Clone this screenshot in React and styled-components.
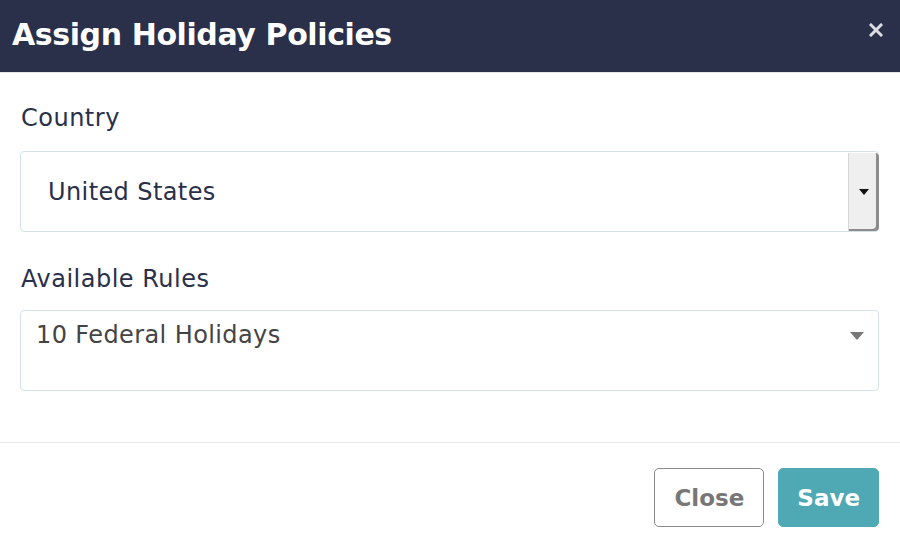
import React from 'react'
import styled, { createGlobalStyle } from 'styled-components'

const GlobalStyle = createGlobalStyle`
  html, body {
    margin: 0;
    padding: 0;
    background: #ffffff;
  }
  body {
    font-family: 'DejaVu Sans', 'Noto Sans', sans-serif;
  }
`

const Modal = styled.div`
  width: 900px;
  height: 548px;
  background: #ffffff;
  display: flex;
  flex-direction: column;
`

const Header = styled.div`
  height: 73px;
  background: #2a2f4a;
  border-bottom: 1px solid #e6e6e6;
  display: flex;
  align-items: center;
  justify-content: space-between;
  padding: 0 14px 0 12px;
  box-sizing: border-box;
`

const Title = styled.h3`
  margin: 0;
  color: #ffffff;
  font-size: 30px;
  font-weight: 700;
  letter-spacing: -0.4px;
  padding-bottom: 3px;
`

const CloseX = styled.button`
  border: none;
  background: none;
  padding: 0;
  margin-top: -12px;
  width: 20px;
  height: 20px;
  display: flex;
  align-items: center;
  justify-content: center;
  cursor: pointer;
`

const Body = styled.div`
  padding: 30px 21px 0 20px;
  display: flex;
  flex-direction: column;
  height: 370px;
  box-sizing: border-box;
  border-bottom: 1px solid #e8e8e8;
`

const Label = styled.label`
  display: block;
  color: #2a2f4a;
  font-size: 24px;
  letter-spacing: 0.5px;
  line-height: 30px;
  margin: 0 0 ${p => p.gap}px 1px;
`

const Field = styled.div`
  position: relative;
  height: 81px;
  border: 1px solid #d3e2e7;
  border-radius: 4px;
  box-sizing: border-box;
  margin-bottom: ${p => p.gap}px;
  display: flex;
  align-items: ${p => (p.top ? 'flex-start' : 'center')};
  padding: ${p => (p.top ? '10px 0 0 15px' : '0 0 0 27px')};
  color: ${p => p.color};
  font-size: 24px;
  letter-spacing: 0.4px;
`

const NativeButton = styled.div`
  position: absolute;
  right: -1px;
  top: 1px;
  bottom: 0;
  width: 30px;
  background: #efefef;
  border-left: 1px solid #d6d6d6;
  box-shadow: inset -3px -2px 0 #8c8c8c;
  border-radius: 0 4px 4px 0;
  display: flex;
  align-items: center;
  justify-content: center;
`

const Caret = styled.span`
  position: absolute;
  right: 14px;
  top: 21px;
  width: 0;
  height: 0;
  border-left: 7px solid transparent;
  border-right: 7px solid transparent;
  border-top: 8px solid #777777;
`

const Footer = styled.div`
  display: flex;
  justify-content: flex-end;
  gap: 14px;
  padding: 25px 21px 0 0;
`

const Button = styled.button`
  height: 59px;
  padding: 0 ${p => p.pad}px;
  border-radius: 5px;
  font-family: 'DejaVu Sans', sans-serif;
  font-size: 23px;
  font-weight: 700;
  cursor: pointer;
  border: 1px solid ${p => (p.primary ? '#4ea9b5' : '#8a8a8a')};
  background: ${p => (p.primary ? '#4ea9b5' : '#ffffff')};
  color: ${p => (p.primary ? '#ffffff' : '#777777')};
`

export default function App() {
  return (
    <>
      <GlobalStyle />
      <Modal>
        <Header>
          <Title>Assign Holiday Policies</Title>
          <CloseX aria-label="close">
            <svg width="14" height="14" viewBox="0 0 14 14">
              <path d="M2 2 L12 12 M12 2 L2 12" stroke="#dcdde3" strokeWidth="3" strokeLinecap="square" />
            </svg>
          </CloseX>
        </Header>
        <Body>
          <Label gap={18}>Country</Label>
          <Field gap={32} color="#2a2f4a">
            United States
            <NativeButton>
              <svg width="10" height="6" viewBox="0 0 10 6">
                <path d="M0 0 L10 0 L5 6 Z" fill="#111" />
              </svg>
            </NativeButton>
          </Field>
          <Label gap={16}>Available Rules</Label>
          <Field gap={0} top color="#444444">
            10 Federal Holidays
            <Caret />
          </Field>
        </Body>
        <Footer>
          <Button pad={19}>Close</Button>
          <Button primary pad={18}>Save</Button>
        </Footer>
      </Modal>
    </>
  )
}
